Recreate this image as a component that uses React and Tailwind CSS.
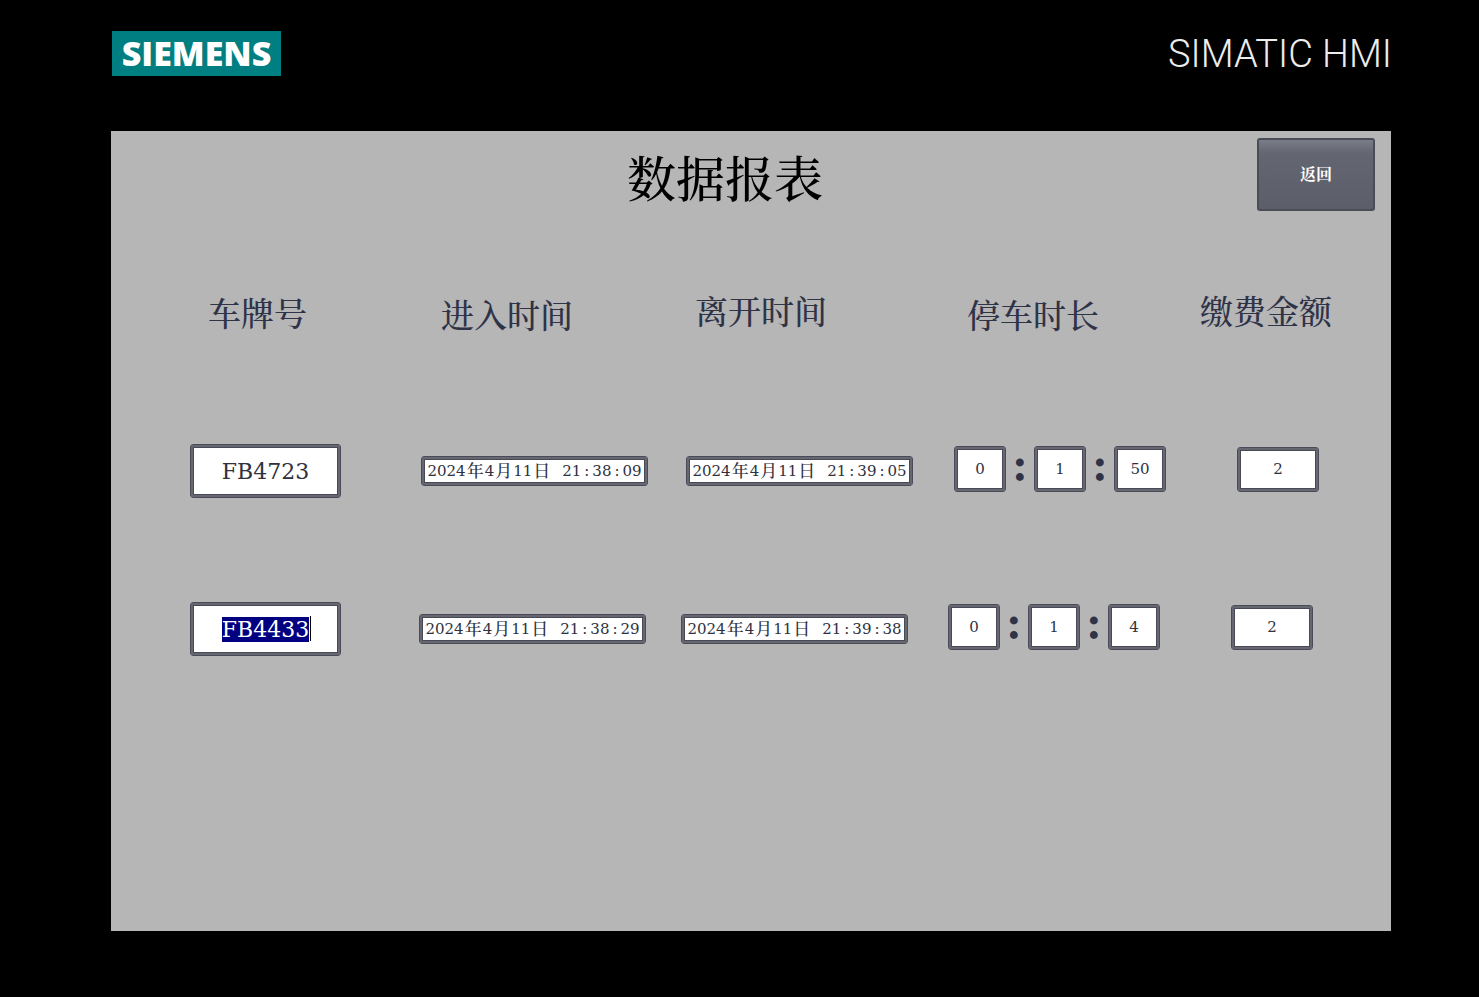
import { Fragment, useEffect, useRef } from "react";

const records = [
  {
    plate: "FB4723",
    enter: "2024年4月11日 21:38:09",
    leave: "2024年4月11日 21:39:05",
    duration: ["0", "1", "50"],
    fee: "2",
    layout: "mt-[105px] grid-cols-[231fr_265fr_268fr_283fr_154fr]",
  },
  {
    plate: "FB4433",
    enter: "2024年4月11日 21:38:29",
    leave: "2024年4月11日 21:39:38",
    duration: ["0", "1", "4"],
    fee: "2",
    editing: true,
    layout: "mt-[104px] grid-cols-[229fr_262fr_267fr_283fr_160fr]",
  },
];

const units = ["时", "分", "秒"];

const field =
  "block rounded-[3px] border border-[#4a4b5a] bg-white p-[4px] text-center text-[#2f3140] shadow-[inset_0_0_0_2px_#66676f,inset_0_0_0_3px_#484958] outline-none";

function App() {
  return (
    <div className="flex min-h-screen flex-col bg-black font-['DejaVu_Serif','SimSun','Noto_Serif_CJK_SC','Noto_Sans_CJK_SC',serif]">
      <header className="flex h-[131px] items-start justify-between pt-[31px] pr-[87px] pl-[112px]">
        <div className="flex h-[45px] w-[169px] items-center justify-center bg-[#007f82] font-['Open_Sans','Noto_Sans',sans-serif] text-[34px] leading-[45px] font-extrabold text-white">
          SIEMENS
        </div>
        <div className="font-['Roboto','Liberation_Sans',sans-serif] text-[38px] leading-[46px] font-light text-[#ececec]">
          SIMATIC HMI
        </div>
      </header>

      <main className="mr-[88px] mb-[66px] ml-[111px] flex-1 bg-[#b6b6b6]">
        <div className="grid grid-cols-[1fr_auto_1fr] items-start pt-[7px] pr-4">
          <h1 className="col-start-2 pt-[11px] pr-[36px] text-[49px] leading-[64px] font-medium text-black">
            数据报表
          </h1>
          <button className="h-[73px] w-[118px] justify-self-end rounded-[3px] border-2 border-[#4a4c56] bg-linear-to-b from-[#7a7c88] from-0% via-[#636570] via-20% to-[#5c5e69] text-[16px] font-bold text-white">
            返回
          </button>
        </div>

        <table className="mt-[78px] block">
          <thead className="block">
            <tr className="grid grid-cols-[233fr_254fr_272fr_233fr_191fr] items-center pl-[97px] text-left text-[33px] leading-[44px] text-[#2f3347]">
              <th className="font-medium">车牌号</th>
              <th className="pt-1 font-medium">进入时间</th>
              <th className="pb-1 font-medium">离开时间</th>
              <th className="pt-1 font-medium">停车时长</th>
              <th className="pb-1 font-medium">缴费金额</th>
            </tr>
          </thead>
          <tbody className="block">
            {records.map((item) => (
              <tr
                key={item.plate}
                className={`grid items-center pl-[79px] ${item.layout}`}
              >
                <td>
                  <PlateInput value={item.plate} editing={item.editing} />
                </td>
                <td>
                  <DateTime value={item.enter} />
                </td>
                <td>
                  <DateTime value={item.leave} />
                </td>
                <td className="flex items-center pb-1">
                  {item.duration.map((value, i) => (
                    <Fragment key={units[i]}>
                      {i > 0 && (
                        <span className="w-7 pb-2 text-center font-['Liberation_Serif',serif] text-[48px] leading-[38px] font-bold text-[#2f3347]">
                          :
                        </span>
                      )}
                      <input
                        aria-label={units[i]}
                        defaultValue={value}
                        className={`${field} h-[46px] w-[52px] text-[15px]`}
                      />
                    </Fragment>
                  ))}
                </td>
                <td className="pb-1">
                  <input
                    aria-label="缴费金额"
                    defaultValue={item.fee}
                    className={`${field} h-[45px] w-[82px] text-[15px]`}
                  />
                </td>
              </tr>
            ))}
          </tbody>
        </table>
      </main>
    </div>
  );
}

function PlateInput({ value, editing }) {
  const ref = useRef(null);

  useEffect(() => {
    if (editing) {
      ref.current.focus();
      ref.current.select();
    }
  }, [editing]);

  return (
    <div className="relative w-[151px]">
      <input
        ref={ref}
        aria-label="车牌号"
        defaultValue={value}
        className={`${field} h-[54px] w-full text-[22px] selection:bg-[#000080] selection:text-white`}
      />
      {editing && (
        <span className="absolute top-[14px] right-[30px] h-[25px] w-px bg-black" />
      )}
    </div>
  );
}

// Separators get a fixed cell so the digits keep a steady pitch
function DateTime({ value }) {
  return (
    <output
      className={`${field} flex h-[30px] w-[227px] items-center justify-center text-[15px] leading-[22px] whitespace-pre`}
    >
      {value.split(/([年月日: ])/).map((part, i) => {
        if (/[年月日]/.test(part)) {
          return (
            <span key={i} className="w-[19px] text-center text-[17px] font-medium">
              {part}
            </span>
          );
        }
        if (part === ":" || part === " ") {
          return (
            <span key={i} className="w-[11px] text-center">
              {part}
            </span>
          );
        }
        return <span key={i}>{part}</span>;
      })}
    </output>
  );
}

export default App;
